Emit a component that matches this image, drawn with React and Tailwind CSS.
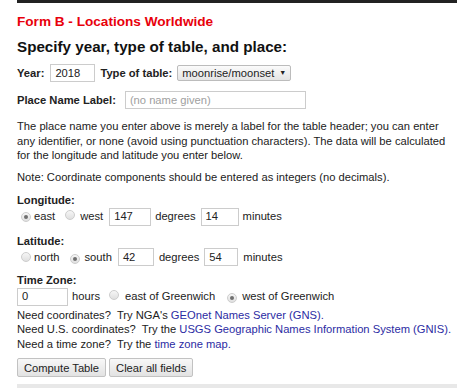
import React from "react";

function Radio({ checked }) {
  return (
    <span className="inline-flex h-[10px] w-[10px] shrink-0 items-center justify-center rounded-full border border-[#cdcdcd] bg-gradient-to-b from-[#f6f6f6] to-[#e0e0e0]">
      {checked && <span className="h-[4px] w-[4px] rounded-full bg-[#707070]" />}
    </span>
  );
}

function Box({ value, w, placeholder }) {
  return (
    <span
      className={`inline-flex h-[18px] shrink-0 items-center border border-[#cccccc] bg-white px-[4px] ${w} ${placeholder ? "text-[#a0a0a0]" : "text-[#222]"}`}
    >
      {value}
    </span>
  );
}

const link = "text-[#2b2ba3]";
const btn =
  "h-[19px] rounded-[2px] border border-[#c2c2c2] bg-gradient-to-b from-[#f8f8f8] to-[#e2e2e2] px-[6px] text-[11.2px] leading-[14px] text-[#222]";

export default function App() {
  return (
    <div className="h-[388px] w-[474px] overflow-hidden bg-white font-['Liberation_Sans',Arial,sans-serif] text-[11.2px] leading-[14.5px] text-[#222]">
      <div className="mx-[17px] h-[3px] bg-[#222]" />
      <div className="px-[17px]">
        <div className="mt-[11px] text-[13.6px] font-bold leading-[16px] text-[#e8000b]">Form B - Locations Worldwide</div>
        <div className="mt-[8px] text-[15.2px] font-bold leading-[18px] text-[#111]">Specify year, type of table, and place:</div>

        <div className="mt-[8px] flex h-[18px] items-center">
          <span className="font-bold">Year:</span>
          <span className="ml-[6px]"><Box value="2018" w="w-[45px]" /></span>
          <span className="ml-[5px] font-bold">Type of table:</span>
          <span className="ml-[5px] inline-flex h-[16px] w-[114px] items-center justify-between rounded-[2px] border border-[#bcbcbc] bg-gradient-to-b from-[#fbfbfb] to-[#e4e4e4] pl-[4px] pr-[4px]">
            <span>moonrise/moonset</span>
            <span className="text-[7px] leading-[8px]">▼</span>
          </span>
        </div>

        <div className="mt-[9px] flex h-[18px] items-center">
          <span className="font-bold">Place Name Label:</span>
          <span className="ml-[9px]"><Box value="(no name given)" w="w-[181px]" placeholder /></span>
        </div>

        <p className="mt-[10px]">
          The place name you enter above is merely a label for the table header; you can enter any identifier, or none (avoid using punctuation characters). The data will be calculated for the longitude and latitude you enter below.
        </p>
        <p className="mt-[7px]">Note: Coordinate components should be entered as integers (no decimals).</p>

        <div className="mt-[9px] font-bold">Longitude:</div>
        <div className="flex h-[18px] items-center pl-[4px]">
          <Radio checked />
          <span className="ml-[3px]">east</span>
          <span className="ml-[10px]"><Radio /></span>
          <span className="ml-[5px]">west</span>
          <span className="ml-[6px]"><Box value="147" w="w-[42px]" /></span>
          <span className="ml-[4px]">degrees</span>
          <span className="ml-[5px]"><Box value="14" w="w-[38px]" /></span>
          <span className="ml-[4px]">minutes</span>
        </div>

        <div className="mt-[8px] font-bold">Latitude:</div>
        <div className="flex h-[18px] items-center pl-[4px]">
          <Radio />
          <span className="ml-[3px]">north</span>
          <span className="ml-[10px]"><Radio checked /></span>
          <span className="ml-[5px]">south</span>
          <span className="ml-[6px]"><Box value="42" w="w-[36px]" /></span>
          <span className="ml-[5px]">degrees</span>
          <span className="ml-[5px]"><Box value="54" w="w-[34px]" /></span>
          <span className="ml-[5px]">minutes</span>
        </div>

        <div className="mt-[7px] font-bold">Time Zone:</div>
        <div className="flex h-[18px] items-center">
          <Box value="0" w="w-[51px]" />
          <span className="ml-[4px]">hours</span>
          <span className="ml-[9px]"><Radio /></span>
          <span className="ml-[6px]">east of Greenwich</span>
          <span className="ml-[12px]"><Radio checked /></span>
          <span className="ml-[5px]">west of Greenwich</span>
        </div>

        <div className="mt-[2px]">
          <div>Need coordinates?&nbsp; Try NGA's <span className={link}>GEOnet Names Server (GNS).</span></div>
          <div>Need U.S. coordinates?&nbsp; Try the <span className={link}>USGS Geographic Names Information System (GNIS).</span></div>
          <div>Need a time zone?&nbsp; Try the <span className={link}>time zone map.</span></div>
        </div>

        <div className="mt-[7px] flex gap-[3px]">
          <button className={btn}>Compute Table</button>
          <button className={btn}>Clear all fields</button>
        </div>
      </div>
      <div className="mx-[17px] mt-[7px] h-[6px] bg-[#e8e8e8]" />
    </div>
  );
}
